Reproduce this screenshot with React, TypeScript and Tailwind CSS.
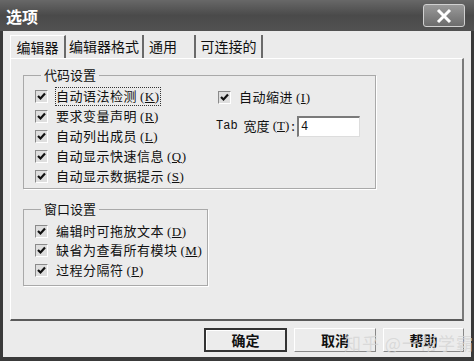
import React from "react"

const CJK = "font-['Noto_Sans_CJK_SC','Noto_Sans',sans-serif]"

const Check = () => (
  <span className="w-[13px] h-[13px] shrink-0 bg-[#dedede] border-t border-l border-[#8a8a8a] border-r border-b border-r-white border-b-white flex items-center justify-center">
    <svg width="9" height="9" viewBox="0 0 9 9">
      <path d="M1 4 L3.5 6.5 L8 1.5" stroke="#111" strokeWidth="2.2" fill="none" />
    </svg>
  </span>
)

const Key = ({ k }: { k: string }) => (
  <span className="ml-[3px] font-['Liberation_Serif',serif] text-[13px]">
    (<span className="underline">{k}</span>)
  </span>
)

const Row = ({ label, k, boxed }: { label: string; k: string; boxed?: boolean }) => (
  <div className="flex items-center h-[20px] gap-[8px]">
    <Check />
    <span className={boxed ? "outline outline-1 outline-dotted outline-[#333] leading-[16px] tracking-[0.5px]" : "leading-[16px] tracking-[0.5px]"}>
      {label}
      <Key k={k} />
    </span>
  </div>
)

export default function App() {
  const code = [
    ["自动语法检测", "K"],
    ["要求变量声明", "R"],
    ["自动列出成员", "L"],
    ["自动显示快速信息", "Q"],
    ["自动显示数据提示", "S"],
  ]
  const win = [
    ["编辑时可拖放文本", "D"],
    ["缺省为查看所有模块", "M"],
    ["过程分隔符", "P"],
  ]
  return (
    <div className={`w-[474px] h-[361px] bg-[#3a3a3a] flex flex-col text-[13px] text-[#111] ${CJK} relative overflow-hidden`}>
      {/* title bar */}
      <div className="h-[31px] shrink-0 flex items-center justify-between pl-[6px] pr-[9px] bg-gradient-to-b from-[#686868] via-[#4a4a4a] to-[#525252]">
        <span className="text-white font-bold text-[16px] leading-none">选项</span>
        <div className="w-[42px] h-[23px] rounded-[3px] border border-[#d0d0d0] bg-gradient-to-b from-[#9a9a9a] to-[#6c6c6c] flex items-center justify-center">
          <svg width="18" height="16" viewBox="0 0 18 16">
            <path d="M3 2 L15 14 M15 2 L3 14" stroke="white" strokeWidth="3" />
          </svg>
        </div>
      </div>

      {/* body */}
      <div className="flex-1 mx-[3px] mb-[4px] bg-[#ebebeb] flex flex-col px-[7px] pt-[4px]">
        {/* tabs */}
        <div className="flex h-[23px] items-stretch">
          <div className="w-[56px] border-t border-l border-white border-r-2 border-r-[#6a6a6a] flex items-center justify-center text-[14px]">编辑器</div>
          <div className="w-[78px] border-r-2 border-[#6a6a6a] flex items-center justify-center text-[14px]">编辑器格式</div>
          <div className="w-[52px] border-r-2 border-[#6a6a6a] flex items-center pl-[5px] text-[14px]">通用</div>
          <div className="w-[67px] border-r-2 border-[#6a6a6a] flex items-center justify-center text-[14px]">可连接的</div>
        </div>

        {/* panel */}
        <div className="h-[263px] border-l border-t border-white border-r-2 border-r-[#7a7a7a] border-b-2 border-b-[#5a5a5a] pl-[12px] pt-[8px] flex flex-col">
          <fieldset className="w-[353px] border border-[#a9a9a9] shadow-[1px_1px_0_#fff] pl-[11px] pb-[2px] flex">
            <legend className="px-[3px] ml-[6px] text-[13px] leading-[16px]">代码设置</legend>
            <div className="w-[183px] pt-[3px] flex flex-col">
              {code.map(([l, k], i) => (
                <Row key={k} label={l} k={k} boxed={i === 0} />
              ))}
            </div>
            <div className="pt-[4px] flex flex-col">
              <Row label="自动缩进" k="I" />
              <div className="flex items-center mt-[8px] -ml-[2px] h-[22px]">
                <span className="font-['Liberation_Mono',monospace] text-[12px] mr-[6px]">Tab</span>
                <span>宽度</span>
                <Key k="T" />
                <span className="ml-[2px] mr-[2px]">:</span>
                <div className="w-[63px] h-[21px] bg-white border-t-2 border-l-2 border-[#7a7a7a] border-r border-b border-r-[#ddd] border-b-[#ddd] flex items-center pl-[2px] font-['Liberation_Mono',monospace] text-[12px]">4</div>
              </div>
            </div>
          </fieldset>

          <fieldset className="w-[185px] mt-[12px] border border-[#a9a9a9] shadow-[1px_1px_0_#fff] pl-[11px] pt-[4px] pb-[5px] flex flex-col">
            <legend className="px-[3px] ml-[6px] text-[13px] leading-[16px]">窗口设置</legend>
            {win.map(([l, k]) => (
              <div key={k} className="h-[19.5px] flex">
                <Row label={l} k={k} />
              </div>
            ))}
          </fieldset>
        </div>

        {/* buttons */}
        <div className="flex justify-end gap-[7px] pt-[7px]">
          <button className="w-[83px] h-[24px] border-2 border-[#333] bg-[#ececec] shadow-[inset_1px_1px_0_#fff] text-[14px] font-bold">确定</button>
          <button className="w-[82px] h-[24px] border border-[#888] border-t-white border-l-white bg-[#ececec] text-[14px] font-bold">取消</button>
          <button className="w-[81px] h-[24px] border border-[#888] border-t-white border-l-white bg-[#ececec] text-[14px] font-bold">帮助</button>
        </div>
      </div>

      {/* watermark */}
      <div className="absolute left-[344px] top-[330px] text-[17px] text-[#d4d4d4]/80 tracking-[1px] pointer-events-none">知乎 @一帮学霸</div>
    </div>
  )
}
